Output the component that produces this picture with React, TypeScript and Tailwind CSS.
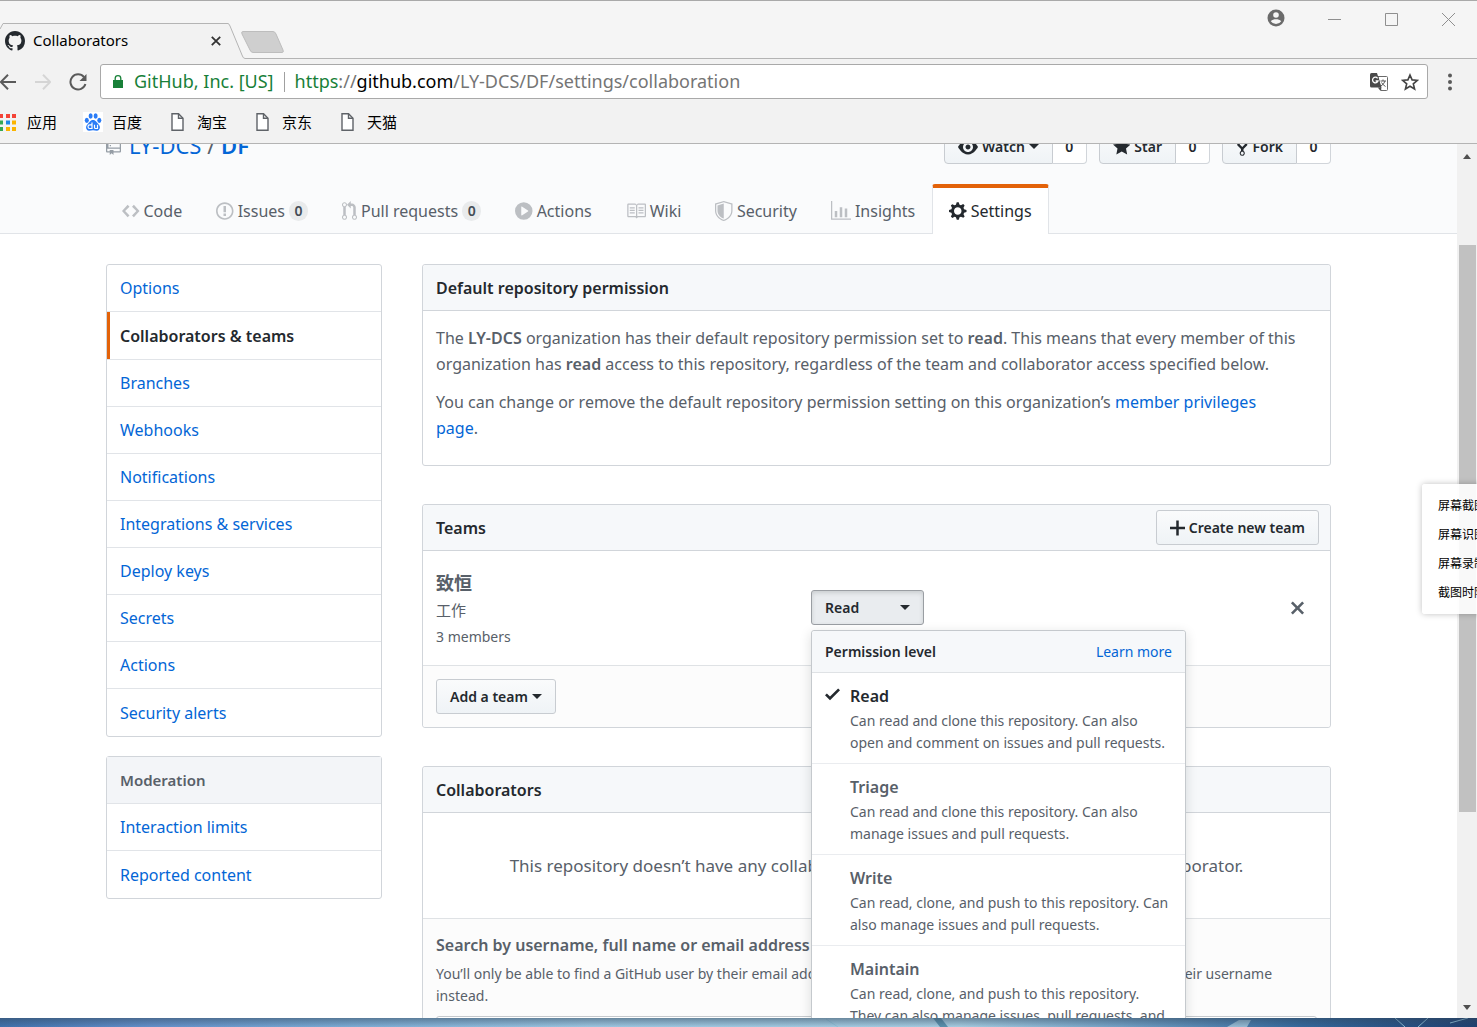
import { useState } from 'react';
import type { ReactNode } from 'react';

const octicons = {
  code: { w: 14, d: 'M9.5 3L8 4.5 11.5 8 8 11.5 9.5 13 14 8 9.5 3zm-5 0L0 8l4.5 5L6 11.5 2.5 8 6 4.5 4.5 3z' },
  issue: { w: 14, d: 'M7 2.3c3.14 0 5.7 2.56 5.7 5.7s-2.56 5.7-5.7 5.7A5.71 5.71 0 011.3 8c0-3.14 2.56-5.7 5.7-5.7zM7 1C3.14 1 0 4.14 0 8s3.14 7 7 7 7-3.14 7-7-3.14-7-7-7zm1 3H6v5h2V4zm0 6H6v2h2v-2z' },
  pull: { w: 12, d: 'M11 11.28V5c-.03-.78-.34-1.47-.94-2.06C9.46 2.35 8.78 2.03 8 2H7V0L4 3l3 3V4h1c.27.02.48.11.69.31.21.2.3.42.31.69v6.28A1.993 1.993 0 0010 15a1.993 1.993 0 001-3.72zm-1 2.92c-.66 0-1.2-.55-1.2-1.2 0-.65.55-1.2 1.2-1.2.65 0 1.2.55 1.2 1.2 0 .65-.55 1.2-1.2 1.2zM4 3c0-1.11-.89-2-2-2a1.993 1.993 0 00-1 3.72v6.56A1.993 1.993 0 002 15a1.993 1.993 0 001-3.72V4.72c.59-.34 1-.98 1-1.72zm-.8 10c0 .66-.55 1.2-1.2 1.2-.65 0-1.2-.55-1.2-1.2 0-.65.55-1.2 1.2-1.2.65 0 1.2.55 1.2 1.2zM2 4.2C1.34 4.2.8 3.65.8 3c0-.65.55-1.2 1.2-1.2.65 0 1.2.55 1.2 1.2 0 .65-.55 1.2-1.2 1.2z' },
  play: { w: 14, d: 'M14 8A7 7 0 110 8a7 7 0 0114 0zm-8.223 3.482l4.599-3.066a.5.5 0 000-.832L5.777 4.518A.5.5 0 005 4.934v6.132a.5.5 0 00.777.416z' },
  book: { w: 16, d: 'M3 5h4v1H3V5zm0 3h4V7H3v1zm0 2h4V9H3v1zm11-5h-4v1h4V5zm0 2h-4v1h4V7zm0 2h-4v1h4V9zm2-6v9c0 .55-.45 1-1 1H9.5l-1 1-1-1H2c-.55 0-1-.45-1-1V3c0-.55.45-1 1-1h5.5l1 1 1-1H15c.55 0 1 .45 1 1zm-8 .5L7.5 3H2v9h6V3.5zm7-.5H9.5l-.5.5V12h6V3z' },
  shield: { w: 14, d: 'M0 2l7-2 7 2v6.02C14 12.69 8.69 16 7 16c-1.69 0-7-3.31-7-7.98V2zm1 .75L7 1l6 1.75v5.268C13 12.104 8.449 15 7 15c-1.449 0-6-2.896-6-6.982V2.75zm1 .75L7 2v12c-1.207 0-5-2.482-5-5.985V3.5z' },
  graph: { w: 16, d: 'M16 14v1H0V0h1v14h15zM5 13H3V8h2v5zm4 0H7V5h2v8zm4 0h-2V6h2v7z' },
  gear: { w: 14, d: 'M14 8.77v-1.6l-1.94-.64-.45-1.09.88-1.84-1.13-1.13-1.81.91-1.09-.45-.69-1.92h-1.6l-.63 1.94-1.11.45-1.84-.88-1.13 1.13.91 1.81-.45 1.09L0 7.23v1.59l1.94.64.45 1.09-.88 1.84 1.13 1.13 1.81-.91 1.09.45.69 1.92h1.59l.63-1.94 1.11-.45 1.84.88 1.13-1.13-.92-1.81.47-1.09L14 8.75v.02zM7 11c-1.66 0-3-1.34-3-3s1.34-3 3-3 3 1.34 3 3-1.34 3-3 3z' },
  eye: { w: 16, d: 'M8.06 2C3 2 0 8 0 8s3 6 8.06 6C13 14 16 8 16 8s-3-6-7.94-6zM8 12c-2.2 0-4-1.78-4-4 0-2.2 1.8-4 4-4 2.22 0 4 1.8 4 4 0 2.22-1.78 4-4 4zm2-4c0 1.11-.89 2-2 2-1.11 0-2-.89-2-2 0-1.11.89-2 2-2 1.11 0 2 .89 2 2z' },
  star: { w: 14, d: 'M14 6l-4.9-.64L7 1 4.9 5.36 0 6l3.6 3.26L2.67 14 7 11.67 11.33 14l-.93-4.74L14 6z' },
  fork: { w: 10, d: 'M8 1a1.993 1.993 0 00-1 3.72V6L5 8 3 6V4.72A1.993 1.993 0 002 1a1.993 1.993 0 00-1 3.72V6.5l3 3v1.78A1.993 1.993 0 005 15a1.993 1.993 0 001-3.72V9.5l3-3V4.72A1.993 1.993 0 008 1zM2 4.2C1.34 4.2.8 3.65.8 3c0-.65.55-1.2 1.2-1.2.65 0 1.2.55 1.2 1.2 0 .65-.55 1.2-1.2 1.2zm3 10c-.66 0-1.2-.55-1.2-1.2 0-.65.55-1.2 1.2-1.2.65 0 1.2.55 1.2 1.2 0 .65-.55 1.2-1.2 1.2zm3-10c-.66 0-1.2-.55-1.2-1.2 0-.65.55-1.2 1.2-1.2.65 0 1.2.55 1.2 1.2 0 .65-.55 1.2-1.2 1.2z' },
  x: { w: 12, d: 'M7.48 8l3.75 3.75-1.48 1.48L6 9.48l-3.75 3.75-1.48-1.48L4.52 8 .77 4.25l1.48-1.48L6 6.52l3.75-3.75 1.48 1.48L7.48 8z' },
  check: { w: 12, d: 'M12 5l-8 8-4-4 1.5-1.5L4 10l6.5-6.5L12 5z' },
  plus: { w: 12, d: 'M12 9H7v5H5V9H0V7h5V2h2v5h5v2z' },
  repo: { w: 12, d: 'M4 9H3V8h1v1zm0-3H3v1h1V6zm0-2H3v1h1V4zm0-2H3v1h1V2zm8-1v12c0 .55-.45 1-1 1H6v2l-1.5-1.5L3 16v-2H1c-.55 0-1-.45-1-1V1c0-.55.45-1 1-1h10c.55 0 1 .45 1 1zm-1 10H1v2h2v-1h3v1h5v-2zm0-10H2v9h9V1z' },
  github: { w: 16, d: 'M8 0C3.58 0 0 3.58 0 8c0 3.54 2.29 6.53 5.47 7.59.4.07.55-.17.55-.38 0-.19-.01-.82-.01-1.49-2.01.37-2.53-.49-2.69-.94-.09-.23-.48-.94-.82-1.13-.28-.15-.68-.52-.01-.53.63-.01 1.08.58 1.23.82.72 1.21 1.87.87 2.33.66.07-.52.28-.87.51-1.07-1.78-.2-3.64-.89-3.64-3.95 0-.87.31-1.59.82-2.15-.08-.2-.36-1.02.08-2.12 0 0 .67-.21 2.2.82.64-.18 1.32-.27 2-.27.68 0 1.36.09 2 .27 1.53-1.04 2.2-.82 2.2-.82.44 1.1.16 1.92.08 2.12.51.56.82 1.27.82 2.15 0 3.07-1.87 3.75-3.65 3.95.29.25.54.73.54 1.48 0 1.07-.01 1.93-.01 2.2 0 .21.15.46.55.38A8.013 8.013 0 0016 8c0-4.42-3.58-8-8-8z' },
};

type IconName = keyof typeof octicons;

function Octicon({ name, className = 'h-5' }: { name: IconName; className?: string }) {
  const icon = octicons[name];
  return (
    <svg viewBox={`0 0 ${icon.w} 16`} className={`w-auto shrink-0 ${className}`} fill="currentColor" fillRule="evenodd" aria-hidden="true">
      <path d={icon.d} />
    </svg>
  );
}

function Caret() {
  return <span className="border-x-5 border-t-5 border-x-transparent border-t-[#24292e]" />;
}

const tabs: { label: string; icon: IconName; count?: number; active?: boolean }[] = [
  { label: 'Code', icon: 'code' },
  { label: 'Issues', icon: 'issue', count: 0 },
  { label: 'Pull requests', icon: 'pull', count: 0 },
  { label: 'Actions', icon: 'play' },
  { label: 'Wiki', icon: 'book' },
  { label: 'Security', icon: 'shield' },
  { label: 'Insights', icon: 'graph' },
  { label: 'Settings', icon: 'gear', active: true },
];

const menu = [
  'Options',
  'Collaborators & teams',
  'Branches',
  'Webhooks',
  'Notifications',
  'Integrations & services',
  'Deploy keys',
  'Secrets',
  'Actions',
  'Security alerts',
];

const levels = [
  { name: 'Read', text: 'Can read and clone this repository. Can also open and comment on issues and pull requests.' },
  { name: 'Triage', text: 'Can read and clone this repository. Can also manage issues and pull requests.' },
  { name: 'Write', text: 'Can read, clone, and push to this repository. Can also manage issues and pull requests.' },
  { name: 'Maintain', text: 'Can read, clone, and push to this repository. They can also manage issues, pull requests, and some repository settings.' },
];

const bookmarks = ['淘宝', '京东', '天猫'];
const captureActions = ['屏幕截图', '屏幕识图', '屏幕录制', '截图时隐藏'];

function TitleBar() {
  return (
    <div className="flex h-[59px] shrink-0 items-end border-t border-[#a9a9a9] bg-[#f5f5f5]">
      <svg viewBox="0 0 4 36" className="h-9 w-1 shrink-0" aria-hidden="true">
        <path d="M0 6L3 .5H4V36H0z" fill="#f2f2f2" />
        <path d="M0 6L3 .5H4" fill="none" stroke="#b4b4b4" />
      </svg>
      <div className="flex h-9 w-56 items-center border-t border-[#b4b4b4] bg-[#f2f2f2] pb-0.5">
        <Octicon name="github" className="ml-px h-5" />
        <span className="ml-2 flex-1 text-[15px] text-black">Collaborators</span>
        <button aria-label="Close tab" className="mr-[7px]">
          <svg viewBox="0 0 10 10" className="size-[10px]" stroke="#333" strokeWidth="1.8">
            <path d="M.8.8l8.4 8.4M9.2.8L.8 9.2" />
          </svg>
        </button>
      </div>
      <svg viewBox="0 0 17 36" className="h-9 w-[17px] shrink-0" aria-hidden="true">
        <path d="M0 .5L15 35.5H17V36H0z" fill="#f2f2f2" />
        <path d="M0 .5Q1 .5 2 3L14 32Q15 35.5 17 35.5" fill="none" stroke="#b4b4b4" />
      </svg>
      <div className="flex h-full flex-1 items-end justify-between border-b border-[#b4b4b4]">
        <button aria-label="New tab" className="-ml-1 mb-[5px]">
          <svg viewBox="0 0 43 22" className="h-[22px] w-[43px]">
            <path d="M2 .5H32Q34 .5 35 3L42 19Q43 21.5 41 21.5H12Q10 21.5 9 19L1 3Q0 .5 2 .5z" fill="#cfcfcf" stroke="#bdbdbd" />
          </svg>
        </button>
        <div className="flex items-center gap-[42px] self-start pt-2 pr-[22px]">
          <button aria-label="Profile">
            <svg viewBox="0 0 18 18" className="size-[18px]">
              <circle cx="9" cy="9" r="8.5" fill="#6b6b6b" />
              <circle cx="9" cy="6" r="2.8" fill="#f5f5f5" />
              <path d="M3.8 12.2C5 10.8 7 10.3 9 10.3s4 .5 5.2 1.9A6.3 6.3 0 019 15a6.3 6.3 0 01-5.2-2.8z" fill="#f5f5f5" />
            </svg>
          </button>
          <div className="flex gap-[43px] pt-0.5">
            <button aria-label="Minimize">
              <svg viewBox="0 0 14 14" className="size-[14px]" stroke="#8f8f8f" fill="none"><path d="M1 7.5h13" /></svg>
            </button>
            <button aria-label="Maximize">
              <svg viewBox="0 0 14 14" className="size-[14px]" stroke="#8f8f8f" fill="none"><path d="M1.5 1.5h12v12h-12z" /></svg>
            </button>
            <button aria-label="Close">
              <svg viewBox="0 0 14 14" className="size-[14px]" stroke="#8f8f8f" fill="none"><path d="M1 1l13 13M14 1L1 14" /></svg>
            </button>
          </div>
        </div>
      </div>
    </div>
  );
}

function Toolbar() {
  return (
    <div className="flex h-[45px] shrink-0 items-center bg-[#f2f2f2] pr-[25px]">
      <button aria-label="Back">
        <svg viewBox="0 0 16 16" className="h-4 w-4" stroke="#5a5a5a" strokeWidth="2" fill="none"><path d="M16 8H1M8 .8L.8 8 8 15.2" /></svg>
      </button>
      <button aria-label="Forward" className="ml-[19px]">
        <svg viewBox="0 0 16 16" className="h-4 w-4" stroke="#d5d5d5" strokeWidth="2" fill="none"><path d="M0 8h15M8 .8L15.2 8 8 15.2" /></svg>
      </button>
      <button aria-label="Reload" className="ml-[18px]">
        <svg viewBox="0 0 18 18" className="size-[18px]" fill="none">
          <path d="M15 4.2A7.6 7.6 0 1016.4 11" stroke="#5a5a5a" strokeWidth="2" />
          <path d="M17.5 1v7h-7z" fill="#5a5a5a" />
        </svg>
      </button>
      <div className="ml-[13px] flex h-[35px] flex-1 items-center rounded-[3px] border border-[#a9a9a9] bg-white pr-2 pl-3 text-[18px]">
        <svg viewBox="0 0 10 13" className="h-[13px] w-[10px]" aria-hidden="true">
          <path d="M0 5h10v8H0z" fill="#188038" />
          <path d="M2.2 5.5V3.5a2.8 2.8 0 015.6 0v2" fill="none" stroke="#188038" strokeWidth="1.3" />
        </svg>
        <span className="ml-[11px] text-[#188038]">GitHub, Inc. [US]</span>
        <span className="mx-[10px] h-5 w-px bg-[#a0a0a0]" />
        <span className="flex-1 whitespace-nowrap text-[#757575]">
          <span className="text-[#188038]">https</span>://<span className="text-black">github.com</span>/LY-DCS/DF/settings/collaboration
        </span>
        <button aria-label="Translate this page">
          <svg viewBox="0 0 18 18" className="size-[18px]">
            <path d="M8 3.5h8.5q1 0 1 1v12q0 1-1 1H11z" fill="#fff" stroke="#6a6a6a" />
            <path d="M1.5 0H7l4.5 14.5H1.5Q0 14.5 0 13V1.5Q0 0 1.5 0z" fill="#4a4a4a" />
            <path d="M7.8 14.5h3.7L10.5 18z" fill="#4a4a4a" />
            <path d="M7.6 5.3A2.8 2.8 0 108 8H5.6" fill="none" stroke="#fff" strokeWidth="1.3" />
            <path d="M10.5 8h5.5M13 6.5V8M15 8q-.8 3-4 5M11.5 9.5q1.5 2.5 4 4" fill="none" stroke="#5a5a5a" />
          </svg>
        </button>
        <button aria-label="Bookmark this page" className="ml-[13px]">
          <svg viewBox="0 0 18 18" className="size-[18px]" fill="none" stroke="#444" strokeWidth="1.6">
            <path d="M9 2l2.1 4.9 5.2.4-4 3.5 1.3 5.2L9 13.2 4.4 16l1.3-5.2-4-3.5 5.2-.4z" />
          </svg>
        </button>
      </div>
      <button aria-label="Browser menu" className="ml-5">
        <svg viewBox="0 0 4 18" className="h-[18px] w-1" fill="#5a5a5a">
          <circle cx="2" cy="2.5" r="2" /><circle cx="2" cy="9" r="2" /><circle cx="2" cy="15.5" r="2" />
        </svg>
      </button>
    </div>
  );
}

function Bookmarks() {
  return (
    <div className="flex h-10 shrink-0 items-center border-b border-[#b4b4b4] bg-[#f2f2f2] pb-[3px] text-[15px] text-black">
      <a href="#apps" className="flex items-center gap-[11px]">
        <svg viewBox="0 0 16 17" className="h-[17px] w-4" aria-hidden="true">
          <path d="M0 0h3v4H0zM6 0h4v4H6zM12 0h4v4h-4z" fill="#f44336" />
          <path d="M0 6.5h3v4H0zM0 13h3v4H0z" fill="#34a853" />
          <path d="M6 6.5h4v4H6z" fill="#1e88e5" />
          <path d="M12 6.5h4v4h-4zM6 13h4v4H6zM12 13h4v4h-4z" fill="#fbb400" />
        </svg>
        应用
      </a>
      <a href="#baidu" className="ml-[26px] flex items-center gap-[9px]">
        <svg viewBox="0 0 20 20" className="size-5" fill="#2a7cf7" aria-hidden="true">
          <path d="M0 0h20v20H0z" fill="#fff" />
          <ellipse cx="3.8" cy="8.3" rx="2" ry="2.6" />
          <ellipse cx="7.6" cy="4" rx="2" ry="2.7" />
          <ellipse cx="12.6" cy="4" rx="2" ry="2.7" />
          <ellipse cx="16.3" cy="8.3" rx="2" ry="2.6" />
          <path d="M10 8c3 0 3.5 2.5 5.5 4.3 2.5 2.2 1.5 6.2-1.5 6.4-1.5.1-2.5-.4-4-.4s-2.5.5-4 .4c-3-.2-4-4.2-1.5-6.4C6.5 10.5 7 8 10 8z" />
          <path d="M9 10.5v6H6.8a1.6 1.6 0 010-3.6H9M11.5 12.8v2.7q0 1 1 1h2v-3.7" fill="none" stroke="#fff" strokeWidth="1.2" />
        </svg>
        百度
      </a>
      {bookmarks.map((name) => (
        <a key={name} href={`#${name}`} className="ml-7 flex items-center gap-3">
          <svg viewBox="0 0 15 18" className="h-[18px] w-[15px]" fill="#fff" stroke="#5f6368" strokeWidth="1.4" aria-hidden="true">
            <path d="M2 .8h6.5L13 5.3v11.9H2z" />
            <path d="M8.5.8v4.5H13" fill="none" />
          </svg>
          {name}
        </a>
      ))}
    </div>
  );
}

function SocialButton({ icon, label, caret }: { icon: IconName; label: string; caret?: boolean }) {
  return (
    <div className="flex h-[35px] text-[14px] font-semibold text-[#24292e]">
      <button className="flex items-center gap-1 rounded-l border border-[#c8ccd1] bg-linear-to-b from-[#fafbfc] to-[#eff3f6] px-[13px]">
        <Octicon name={icon} />
        {label}
        {caret && <Caret />}
      </button>
      <a href={`#${label}`} className="flex w-[34px] items-center justify-center rounded-r border border-l-0 border-[#d1d5da] bg-white">0</a>
    </div>
  );
}

function RepoHeader() {
  return (
    <div className="-mt-4 border-b border-[#e1e4e8] bg-[#fafbfc] pr-5">
      <div className="mx-auto max-w-[1225px]">
        <div className="flex items-start justify-between">
          <div className="flex items-center gap-2 text-[22px] leading-8 text-[#586069]">
            <Octicon name="repo" className="h-5 text-[#959da5]" />
            <span>
              <a href="#owner" className="text-[#0366d6]">LY-DCS</a> / <a href="#repo" className="font-semibold text-[#0366d6]">DF</a>
            </span>
          </div>
          <div className="flex gap-3">
            <SocialButton icon="eye" label="Watch" caret />
            <SocialButton icon="star" label="Star" />
            <SocialButton icon="fork" label="Fork" />
          </div>
        </div>
        <nav className="mt-5 -ml-px flex text-[16px]">
          {tabs.map((tab) => (
            <a
              key={tab.label}
              href={`#${tab.label}`}
              className={
                tab.active
                  ? '-mb-px flex h-[50px] items-center gap-1 rounded-t-[3px] border-x border-t-4 border-x-[#e1e4e8] border-t-[#e36209] bg-white px-4 pb-px text-[#24292e]'
                  : 'flex h-[49px] items-center gap-1 border-x border-t-4 border-transparent px-4 text-[#586069]'
              }
            >
              <Octicon name={tab.icon} className={tab.active ? 'h-5' : 'h-5 text-[#bcbfc3]'} />
              {tab.label}
              {tab.count !== undefined && (
                <span className="flex h-5 min-w-[19px] items-center justify-center rounded-full bg-[#e9ebec] text-[14px] font-semibold text-[#444d56]">
                  {tab.count}
                </span>
              )}
            </a>
          ))}
        </nav>
      </div>
    </div>
  );
}

function Sidebar() {
  return (
    <aside className="w-[276px] shrink-0 text-[16px] text-[#0366d6]">
      <nav className="divide-y divide-[#e1e4e8] rounded-[3px] border border-[#d1d5da] bg-white">
        {menu.map((item) => (
          <a
            key={item}
            href={`#${item}`}
            className={
              item === 'Collaborators & teams'
                ? 'flex h-12 items-center font-semibold text-[#24292e]'
                : 'flex h-[47px] items-center px-[13px]'
            }
          >
            {item === 'Collaborators & teams' && <span className="mr-[10px] w-[3px] self-stretch bg-[#e36209]" />}
            {item}
          </a>
        ))}
      </nav>
      <nav className="mt-[19px] divide-y divide-[#e1e4e8] rounded-[3px] border border-[#d1d5da] bg-white">
        <h3 className="flex h-[47px] items-center bg-[#f3f5f8] px-[13px] text-[15px] font-semibold text-[#586069]">Moderation</h3>
        <a href="#limits" className="flex h-[47px] items-center px-[13px]">Interaction limits</a>
        <a href="#reported" className="flex h-[47px] items-center px-[13px]">Reported content</a>
      </nav>
    </aside>
  );
}

function Box({ title, action, children }: { title: string; action?: ReactNode; children: ReactNode }) {
  return (
    <section className="rounded-[3px] border border-[#d1d5da] bg-white">
      <div className="flex h-[46px] items-center justify-between rounded-t-[3px] border-b border-[#d1d5da] bg-[#f6f8fa] pr-[11px] pl-[13px]">
        <h3 className="text-[16px] font-semibold text-[#24292e]">{title}</h3>
        {action}
      </div>
      {children}
    </section>
  );
}

function PermissionMenu() {
  const [open, setOpen] = useState(true);
  const [level, setLevel] = useState('Read');

  return (
    <div className="relative">
      <button
        onClick={() => setOpen(!open)}
        aria-expanded={open}
        className="flex h-[35px] w-[113px] items-center justify-between rounded-[3px] border border-[#9a9ea3] bg-[#e9ecef] px-[13px] text-[14px] font-semibold text-[#24292e] shadow-[inset_0_2px_4px_rgba(27,31,35,0.15)]"
      >
        {level}
        <Caret />
      </button>
      {open && (
        <div className="absolute top-10 left-0 z-10 w-[375px] rounded-[3px] border border-[#c5c9cd] bg-white shadow-[0_3px_12px_rgba(27,31,35,0.15)]">
          <div className="flex h-[42px] items-center justify-between rounded-t-[3px] border-b border-[#dfe2e5] bg-[#f6f8fa] px-[13px] text-[14px]">
            <span className="font-semibold text-[#24292e]">Permission level</span>
            <a href="#learn" className="text-[#0366d6]">Learn more</a>
          </div>
          {levels.map((item) => (
            <button
              key={item.name}
              onClick={() => setLevel(item.name)}
              className="flex w-full items-start border-b border-[#eaecef] px-[13px] pt-[11px] pb-[9px] text-left text-[#586069]"
            >
              <span className="w-[25px] shrink-0 text-[#24292e]">{level === item.name && <Octicon name="check" />}</span>
              <span>
                <span className={level === item.name ? 'block text-[16px] leading-6 font-semibold text-[#24292e]' : 'block text-[16px] leading-6 font-semibold'}>
                  {item.name}
                </span>
                <span className="mt-0.5 block text-[14px] leading-[22px]">{item.text}</span>
              </span>
            </button>
          ))}
        </div>
      )}
    </div>
  );
}

function Settings() {
  return (
    <main className="flex min-w-0 flex-1 flex-col gap-[38px] text-[16px] text-[#586069]">
      <Box title="Default repository permission">
        <div className="space-y-3 px-[13px] pt-[14px] pb-6 leading-[26px]">
          <p>
            The <strong className="font-semibold">LY-DCS</strong> organization has their default repository permission set to{' '}
            <strong className="font-semibold">read</strong>. This means that every member of this
            <br />
            organization has <strong className="font-semibold">read</strong> access to this repository, regardless of the team and
            collaborator access specified below.
          </p>
          <p>
            You can change or remove the default repository permission setting on this organization’s{' '}
            <a href="#privileges" className="text-[#0366d6]">
              member privileges
              <br />
              page
            </a>
            .
          </p>
        </div>
      </Box>

      <Box
        title="Teams"
        action={
          <button className="flex h-[35px] items-center gap-1 rounded-[3px] border border-[#c8ccd1] bg-linear-to-b from-[#fafbfc] to-[#eff3f6] px-[13px] text-[14px] font-semibold text-[#24292e]">
            <Octicon name="plus" />
            Create new team
          </button>
        }
      >
        <div className="flex h-[115px] items-center border-b border-[#dfe2e5] px-[13px] pb-px">
          <div className="w-[375px] pt-1 text-[14px]">
            <a href="#team" className="block text-[18px] leading-[27px] font-bold">致恒</a>
            <p className="text-[15px] leading-[27px]">工作</p>
            <p className="leading-[26px]">3 members</p>
          </div>
          <PermissionMenu />
          <button aria-label="Remove team" className="mr-3 ml-auto">
            <Octicon name="x" />
          </button>
        </div>
        <div className="rounded-b-[3px] bg-[#fcfcfc] p-[13px]">
          <button className="flex h-[35px] items-center gap-1 rounded-[3px] border border-[#c8ccd1] bg-linear-to-b from-[#fafbfc] to-[#eff3f6] px-[13px] text-[14px] font-semibold text-[#24292e]">
            Add a team
            <Caret />
          </button>
        </div>
      </Box>

      <Box title="Collaborators">
        <p className="flex h-[106px] items-center justify-center border-b border-[#dfe2e5] text-[17px]">
          This repository doesn’t have any collaborators yet. Use the form below to add a collaborator.
        </p>
        <div className="bg-[#fcfcfc] px-[13px] pt-[13px] pb-4">
          <label htmlFor="search-member" className="block leading-[26px] font-semibold">
            Search by username, full name or email address
          </label>
          <p className="mt-[5px] text-[14px] leading-[22px]">
            You’ll only be able to find a GitHub user by their email address if they’ve chosen to list it publicly. Otherwise, use their username
            <br />
            instead.
          </p>
          <input id="search-member" type="text" className="mt-[9px] h-[42px] w-full rounded-[3px] border border-[#c5c9cd] bg-white px-3" />
        </div>
      </Box>
    </main>
  );
}

function Scrollbar() {
  return (
    <div className="flex w-5 shrink-0 flex-col items-center bg-[#f1f1f1]" aria-hidden="true">
      <span className="mt-[10px] border-x-4 border-b-5 border-x-transparent border-b-[#505050]" />
      <span className="mt-[86px] h-[567px] w-[17px] bg-[#c1c1c1]" />
      <span className="mt-auto mb-2 border-x-4 border-t-5 border-x-transparent border-t-[#505050]" />
    </div>
  );
}

function Desktop() {
  return (
    <svg viewBox="0 0 1477 9" preserveAspectRatio="none" className="block h-[9px] w-full shrink-0" aria-hidden="true">
      <defs>
        <linearGradient id="sky">
          <stop offset="0" stopColor="#3f71ac" />
          <stop offset=".1" stopColor="#628fc9" />
          <stop offset=".22" stopColor="#78a8d3" />
          <stop offset=".4" stopColor="#9bc5e0" />
          <stop offset=".65" stopColor="#a5cbe0" />
          <stop offset=".76" stopColor="#719fc4" />
          <stop offset=".88" stopColor="#34689c" />
          <stop offset="1" stopColor="#1d3f70" />
        </linearGradient>
        <linearGradient id="shade" x2="0" y2="1">
          <stop offset="0" stopColor="#33485c" stopOpacity=".5" />
          <stop offset="1" stopColor="#33485c" stopOpacity="0" />
        </linearGradient>
      </defs>
      <path d="M0 0h1477v9H0z" fill="url(#sky)" />
      <path d="M933 0h8l7 9h-8z" fill="#5990ad" />
      <path d="M1239 2h12l-4 7h-20z" fill="#b5d6e6" fillOpacity=".7" />
      <path d="M826 1l12 8M1395 0l10 9M1418 9l10-9M1450 5l18-5" stroke="#8fc0d8" fill="none" />
      <path d="M0 0h1477v9H0z" fill="url(#shade)" />
    </svg>
  );
}

export default function App() {
  return (
    <div className="relative flex h-screen flex-col overflow-hidden bg-white font-['Noto_Sans','Noto_Sans_CJK_SC',sans-serif] text-[#24292e]">
      <TitleBar />
      <Toolbar />
      <Bookmarks />
      <div className="flex min-h-0 flex-1 overflow-hidden">
        <div className="min-w-0 flex-1 overflow-hidden pt-px">
          <RepoHeader />
          <div className="pt-[30px] pr-5">
            <div className="mx-auto flex max-w-[1225px] items-start gap-10">
              <Sidebar />
              <Settings />
            </div>
          </div>
        </div>
        <Scrollbar />
      </div>
      <Desktop />

      {/* screen capture popup, hangs off the right edge */}
      <div className="absolute top-[484px] -right-8 z-20 flex w-[87px] flex-col rounded-[3px] bg-white/90 py-[7px] pl-4 text-[12px] text-black shadow-[0_0_6px_rgba(0,0,0,0.25)]">
        {captureActions.map((name) => (
          <button key={name} className="h-[29px] text-left whitespace-nowrap">{name}</button>
        ))}
      </div>
    </div>
  );
}
